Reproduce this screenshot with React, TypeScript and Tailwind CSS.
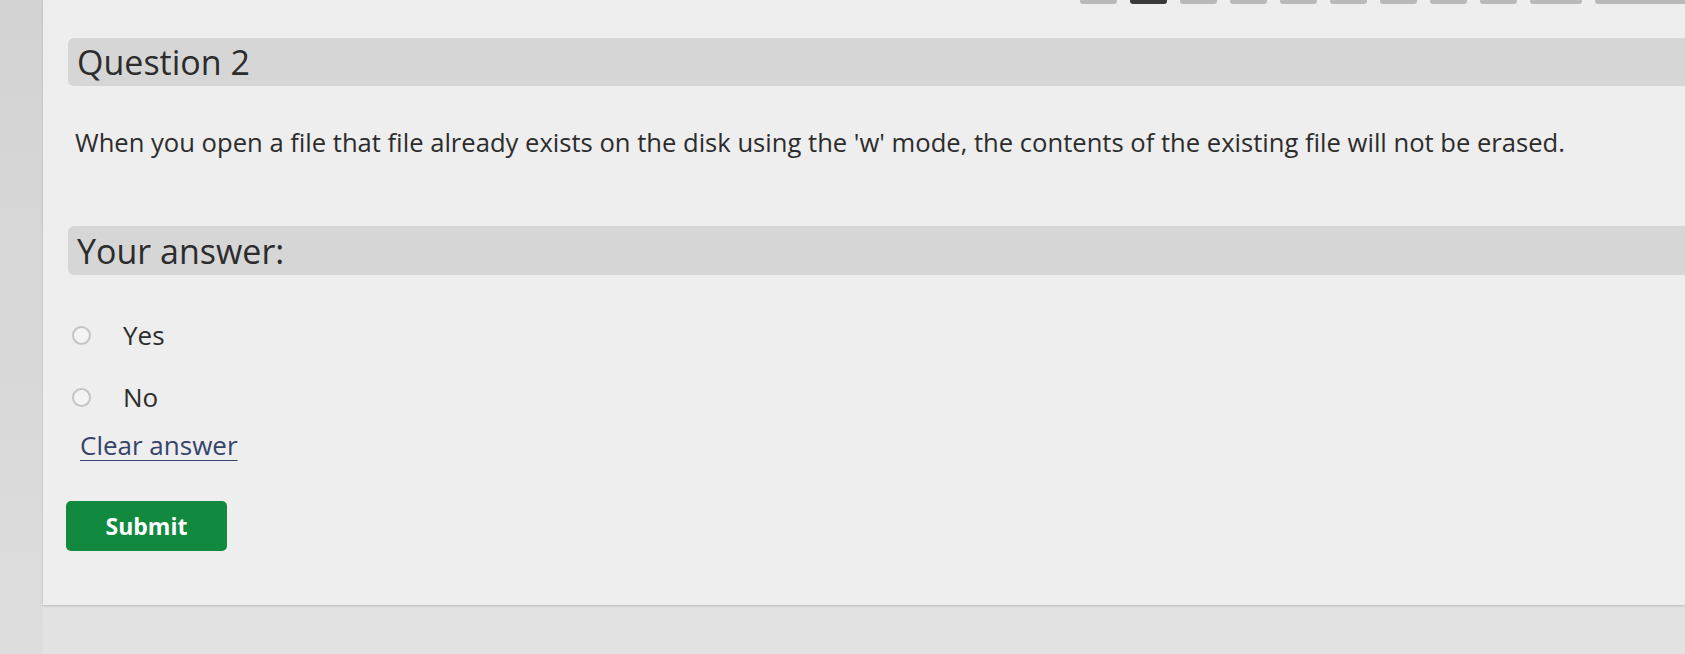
import { useState } from "react";

const tabs = [0, 1, 2, 3, 4, 5, 6, 7, 8];

export default function App() {
  const [answer, setAnswer] = useState<string | null>(null);

  return (
    <div className="w-[1685px] h-[654px] overflow-hidden flex bg-[#e2e2e2] font-['Open_Sans',sans-serif] text-[#2c2c2c]">
      <div className="w-[43px] shrink-0 bg-gradient-to-b from-[#d3d3d3] to-[#dddddd]" />
      <div className="flex-1 flex flex-col">
        <div className="relative h-[605px] bg-[#eeeeee] shadow-[0_1px_2px_rgba(0,0,0,0.18)] pl-[25px]">
          {/* pagination strip cut off at the top edge */}
          <div className="absolute top-0 left-[1037px] right-0 flex gap-[13px]">
            {tabs.map((t) => (
              <div key={t} className={`h-[4px] w-[37px] rounded-b-[3px] ${t === 1 ? "bg-[#3a3a3a]" : "bg-[#b9b9b9]"}`} />
            ))}
            <div className="h-[4px] w-[52px] rounded-b-[3px] bg-[#b9b9b9]" />
            <div className="h-[4px] flex-1 rounded-bl-[3px] bg-[#b9b9b9]" />
          </div>

          <div className="mt-[38px] h-[48px] bg-[#d6d6d6] rounded-l-[6px] flex items-center pl-[9px]">
            <h2 className="text-[34px] leading-none">Question 2</h2>
          </div>

          <p className="mt-[39px] ml-[7px] text-[25.6px] leading-[36px]">
            When you open a file that file already exists on the disk using the 'w' mode, the contents of the existing file will not be erased.
          </p>

          <div className="mt-[65px] h-[49px] bg-[#d6d6d6] rounded-l-[6px] flex items-center pl-[9px]">
            <h3 className="text-[34px] leading-none">Your answer:</h3>
          </div>

          <div className="mt-[42px] ml-[4px] flex flex-col gap-[26px]">
            {["Yes", "No"].map((opt) => (
              <label key={opt} className="h-[36px] flex items-center cursor-pointer" onClick={() => setAnswer(opt)}>
                <span className="w-[19px] h-[19px] rounded-full border-2 border-[#c4c4c4] bg-[#f3f3f3] flex items-center justify-center">
                  {answer === opt && <span className="w-[8px] h-[8px] rounded-full bg-[#555]" />}
                </span>
                <span className="ml-[32px] text-[26px] leading-none">{opt}</span>
              </label>
            ))}
          </div>

          <button onClick={() => setAnswer(null)} className="block mt-[12px] ml-[12px] text-[26px] leading-[36px] text-[#36436a] underline underline-offset-[5px] decoration-1">
            Clear answer
          </button>

          <button className="mt-[38px] ml-[-2px] w-[161px] h-[50px] rounded-[5px] bg-[#11893f] text-white text-[23px] font-bold">
            Submit
          </button>
        </div>
      </div>
    </div>
  );
}
